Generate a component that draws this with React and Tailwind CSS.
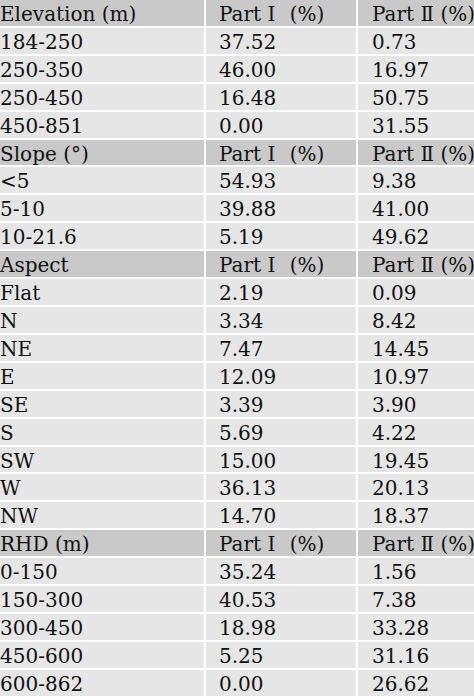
const sections = [
  {
    title: "Elevation (m)",
    rows: [
      ["184-250", "37.52", "0.73"],
      ["250-350", "46.00", "16.97"],
      ["250-450", "16.48", "50.75"],
      ["450-851", "0.00", "31.55"],
    ],
  },
  {
    title: "Slope (°)",
    rows: [
      ["<5", "54.93", "9.38"],
      ["5-10", "39.88", "41.00"],
      ["10-21.6", "5.19", "49.62"],
    ],
  },
  {
    title: "Aspect",
    rows: [
      ["Flat", "2.19", "0.09"],
      ["N", "3.34", "8.42"],
      ["NE", "7.47", "14.45"],
      ["E", "12.09", "10.97"],
      ["SE", "3.39", "3.90"],
      ["S", "5.69", "4.22"],
      ["SW", "15.00", "19.45"],
      ["W", "36.13", "20.13"],
      ["NW", "14.70", "18.37"],
    ],
  },
  {
    title: "RHD (m)",
    rows: [
      ["0-150", "35.24", "1.56"],
      ["150-300", "40.53", "7.38"],
      ["300-450", "18.98", "33.28"],
      ["450-600", "5.25", "31.16"],
      ["600-862", "0.00", "26.62"],
    ],
  },
];

function Cell({ children, head, pad }) {
  return (
    <div
      className={`h-[25.92px] ${head ? "bg-[#c9c9c9]" : "bg-[#e6e6e6]"} ${pad} leading-[24.6px] pt-[2px] whitespace-nowrap`}
    >
      {children}
    </div>
  );
}

export default function App() {
  return (
    <div
      className="w-[474px] h-[696px] overflow-hidden bg-white grid grid-cols-[204px_150px_1fr] gap-x-[2px] gap-y-[2px] content-start text-[20px] text-[#111]"
      style={{ fontFamily: '"DejaVu Serif", "Noto Sans CJK SC", serif' }}
    >
      {sections.map((s) => (
        <div key={s.title} className="contents">
          <Cell head pad="pl-0">{s.title}</Cell>
          <Cell head pad="pl-[13px]">
            Part <span className="pr-[8px]">Ⅰ</span> (%)
          </Cell>
          <Cell head pad="pl-[14px]">Part Ⅱ (%)</Cell>
          {s.rows.map((r) => (
            <div key={r[0]} className="contents">
              <Cell pad="pl-0">{r[0]}</Cell>
              <Cell pad="pl-[13px]">{r[1]}</Cell>
              <Cell pad="pl-[14px]">{r[2]}</Cell>
            </div>
          ))}
        </div>
      ))}
    </div>
  );
}
